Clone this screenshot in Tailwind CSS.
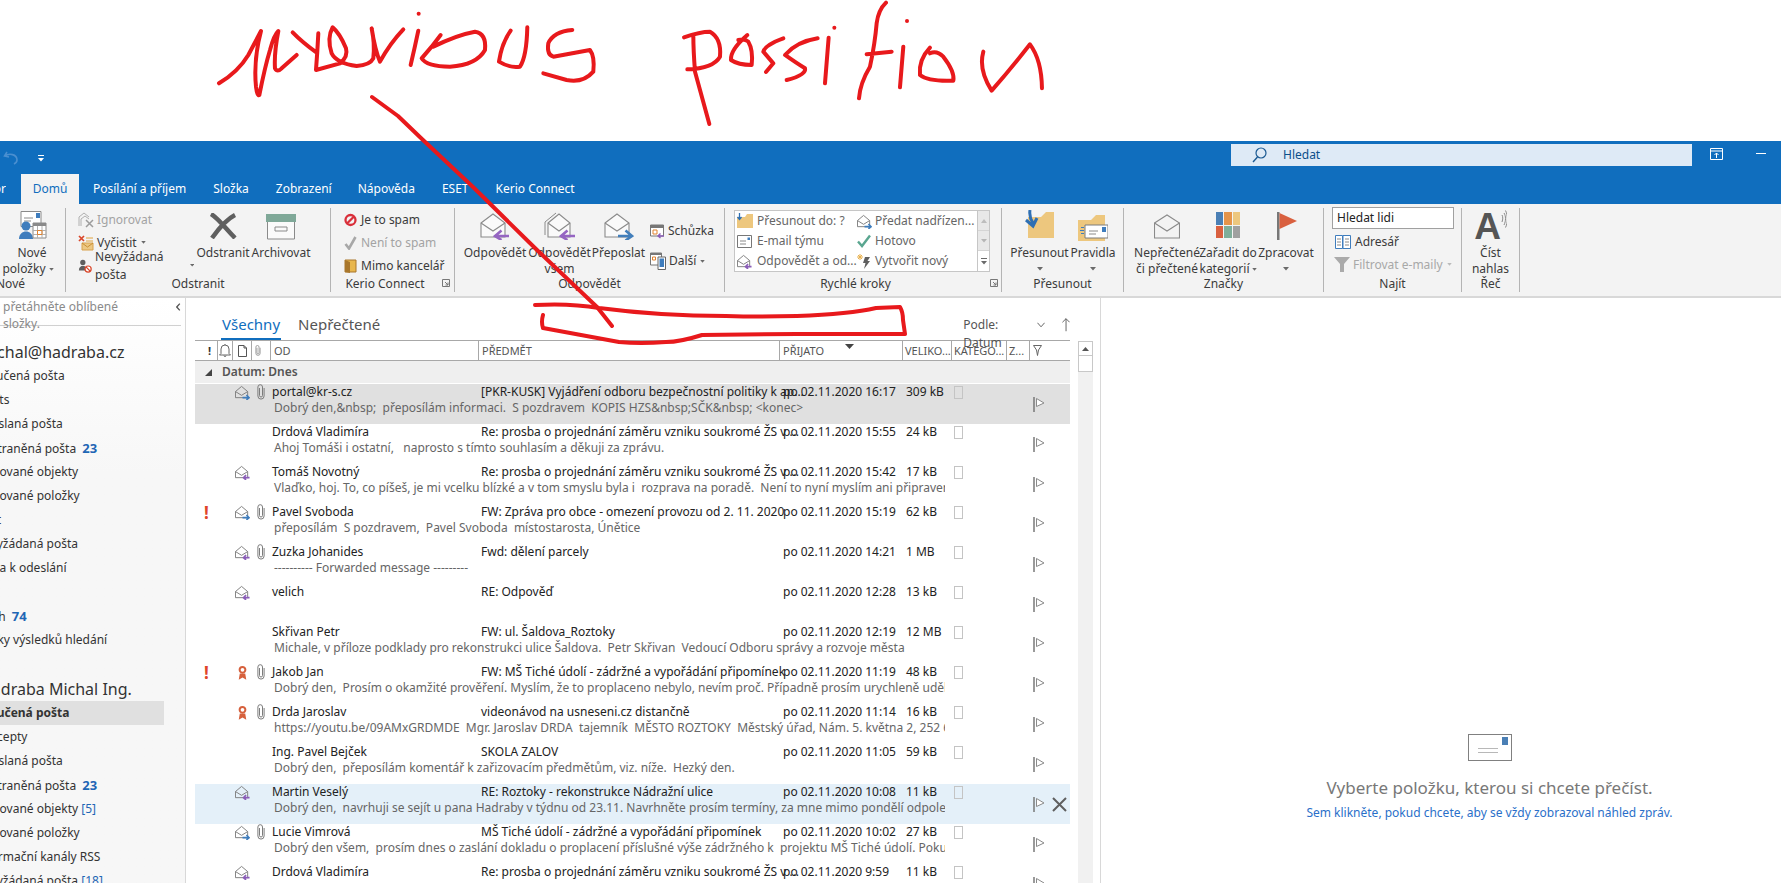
<!DOCTYPE html>
<html lang="cs">
<head>
    <meta charset="UTF-8">
    <title>Outlook</title>
    <script src="https://cdn.jsdelivr.net/npm/@tailwindcss/browser@4"></script>
</head>
<body class="bg-white">
<svg class="hidden" xmlns="http://www.w3.org/2000/svg">
    <symbol id="caret" viewBox="0 0 6 4"><path d="M0 0h6L3 3.5z" fill="#6a6a6a"/></symbol>
    <symbol id="env-reply" viewBox="0 0 16 16"><path d="M.5 7 7 1.5 13.500 7v6.500H.5z" fill="none" stroke="#7c7c7c"/><path d="M.5 7 7 11l6.500-4" fill="none" stroke="#7c7c7c"/><path d="M15.500 13.500H9m2.800-2.800L9 13.500l2.800 2.400" fill="none" stroke="#8a5db8" stroke-width="1.700"/></symbol>
    <symbol id="env-fwd" viewBox="0 0 16 16"><path d="M.5 7 7 1.500 13.500 7v6.500H.5z" fill="none" stroke="#7c7c7c"/><path d="M.5 7 7 11l6.500-4" fill="none" stroke="#7c7c7c"/><path d="M8 13.500h7m-2.800-2.800 2.800 2.800-2.800 2.400" fill="none" stroke="#3f7dbd" stroke-width="1.700"/></symbol>
    <symbol id="clip" viewBox="0 0 8 16"><path d="M2.500 4v7.500a1.500 1.500 0 0 0 3 0V3a2.300 2.300 0 0 0-4.600 0v9a3.100 3.100 0 0 0 6.200 0V4" fill="none" stroke="#7c7c7c"/></symbol>
    <symbol id="badge" viewBox="0 0 10 16"><circle cx="5" cy="4.500" r="3.200" fill="none" stroke="#d6603c" stroke-width="2.200"/><path d="M2 8.500.8 15.500 5 13l4.200 2.500L8 8.500z" fill="#d6603c"/></symbol>
    <symbol id="flag" viewBox="0 0 12 15"><path d="M1 0v15" stroke="#6f6f6f" stroke-width="1.400"/><path d="M3.500 1.500 11 6 3.500 9.500z" fill="#fff" stroke="#8a8a8a"/></symbol>
    <symbol id="big-reply" viewBox="0 0 30 28"><path d="M1 11 13 2l12 9v14H1z" fill="#fff" fill-opacity=".6" stroke="#8a8a8a" stroke-width="1.100"/><path d="M1 11l12 8 12-8" fill="none" stroke="#8a8a8a" stroke-width="1.100"/><path d="M29 24H15m6.500-5.500L15 24l6.500 4" fill="none" stroke="#9565c2" stroke-width="2.600"/></symbol>
    <symbol id="big-fwd" viewBox="0 0 30 28"><path d="M1 11 13 2l12 9v14H1z" fill="#fff" fill-opacity=".6" stroke="#8a8a8a" stroke-width="1.100"/><path d="M1 11l12 8 12-8" fill="none" stroke="#8a8a8a" stroke-width="1.100"/><path d="M14 24h14m-6.500-5.500L28 24l-6.500 4.500" fill="none" stroke="#437fbb" stroke-width="2.600"/></symbol>
</svg>

<div class="relative w-full h-screen overflow-hidden font-['Noto_Sans',sans-serif] text-[12px] text-[#333]">
    <div class="h-[141px]"></div>

    <!-- title bar -->
    <div class="h-[33px] bg-[#106ebe] flex items-center">
        <svg class="ml-[3px] w-[17px] h-[16px] mt-[1px]" viewBox="0 0 17 16"><path d="M4 2 1.500 6 6 7M2 6c4-3 12-2 12 4 0 2-1 3-3 4" fill="none" stroke="#4a8fd0" stroke-width="1.600"/></svg>
        <svg class="ml-[18px] w-[6px] h-[7px] mt-[1px]" viewBox="0 0 6 7"><path d="M0 0h6v1H0zM0 3h6L3 6.500z" fill="#fff"/></svg>
        <div class="ml-[1187px] w-[461px] h-[22px] -mt-[6px] bg-[#deeaf6] flex items-center text-[#0b4f8a]">
            <svg class="ml-[21px] w-[15px] h-[16px]" viewBox="0 0 15 16"><circle cx="9" cy="6" r="5" fill="none" stroke="#1b5a92" stroke-width="1.200"/><path d="M5.500 10 1 15" stroke="#1b5a92" stroke-width="1.400"/></svg>
            <span class="ml-[16px] text-[12px]">Hledat</span>
        </div>
        <svg class="ml-[18px] w-[13px] h-[12px] -mt-[8px]" viewBox="0 0 13 12"><path d="M.5.5h12v11H.5zM.5 3h12M6.500 10V5M4.500 7l2-2 2 2" fill="none" stroke="#fff"/></svg>
        <div class="ml-[33px] w-[10px] h-[1px] -mt-[8px] bg-white"></div>
    </div>

    <!-- tabs -->
    <div class="h-[30px] bg-[#106ebe] flex text-white text-[12px]">
        <div class="w-[6px] overflow-hidden flex justify-end items-center"><span>Soubor</span></div>
        <div class="ml-[15px] w-[58px] bg-[#f3f3f3] text-[#106ebe] flex items-center justify-center">Domů</div>
        <div class="ml-[14px] flex items-center">Posílání a příjem</div>
        <div class="ml-[27px] flex items-center">Složka</div>
        <div class="ml-[27px] flex items-center">Zobrazení</div>
        <div class="ml-[26px] flex items-center">Nápověda</div>
        <div class="ml-[27px] flex items-center">ESET</div>
        <div class="ml-[27px] flex items-center">Kerio Connect</div>
    </div>

    <!-- ribbon -->
    <div class="h-[94px] bg-[#f3f3f3] border-b-2 border-[#d8d8d8] flex pt-[4px] text-[#3b3b3b]">
        <!-- Nove -->
        <section class="w-[66px] h-[84px] border-r border-[#b4b4b4] flex flex-col">
            <div class="h-[72px] flex">
                <div class="w-[60px] ml-[2px] flex flex-col items-center">
                    <svg class="mt-[3px] h-[29px] w-[30px] mb-[5px]" viewBox="0 0 30 29"><path d="M4 .5h20v15H4z" fill="#fff" stroke="#8a8a8a"/><path d="M19 2h4v5h-4z" fill="#3f7dbd"/><path d="M7 7h9M7 10h7" stroke="#8a8a8a"/><circle cx="9" cy="15" r="4.500" fill="#3f7dbd"/><path d="M2 28c0-10 14-10 14 0z" fill="#3f7dbd"/><path d="M16 12h13v15H16z" fill="#fff" stroke="#8a8a8a"/><path d="M16 12h13v3H16z" fill="#8a8a8a"/><path d="M20.500 15v12M25 15v12M16 19.500h13M16 23.500h13" stroke="#b0b0b0"/><path d="M20.500 19.500H25v4h-4.500z" fill="none" stroke="#e0822f"/></svg>
                    <div class="leading-[16px]">Nové</div>
                    <div class="leading-[16px] flex items-center gap-[3px] -ml-[8px]">položky<svg class="w-[5px] h-[3px]"><use href="#caret"/></svg></div>
                </div>
            </div>
            <div class="-ml-[4px] h-[16px] leading-[14px]">Nové</div>
        </section>
        <!-- Odstranit -->
        <section class="w-[265px] h-[84px] border-r border-[#b4b4b4] flex flex-col">
            <div class="h-[72px] flex">
                <div class="w-[128px] pl-[12px]">
                    <div class="h-[23px] flex items-center gap-[3px] text-[#a3a3a3]"><svg class="w-[16px] h-[16px]" viewBox="0 0 16 16"><path d="M1 14V5l5-4 5 4M3 14V7l4-3 4 3" fill="none" stroke="#b0b0b0"/><path d="M8 8l7 7m0-7-7 7" stroke="#9c9c9c" stroke-width="1.500"/></svg>Ignorovat</div>
                    <div class="h-[23px] flex items-center gap-[3px]"><svg class="w-[16px] h-[16px]" viewBox="0 0 16 16"><path d="M1 1l5 5m0-5-5 5" stroke="#d9472b" stroke-width="1.700"/><path d="M8 3h7M8 6h7" stroke="#e0a23c"/><path d="M4 8h11v7H4z" fill="#ecc883" stroke="#d9a24c"/><path d="M4 8l5.500 4L15 8" fill="none" stroke="#c98f35"/></svg>Vyčistit<svg class="w-[5px] h-[3px] ml-[1px]"><use href="#caret"/></svg></div>
                    <div class="h-[23px] flex items-center gap-[3px]"><svg class="w-[16px] h-[16px]" viewBox="0 0 16 16"><circle cx="5.500" cy="4" r="3" fill="#5e5e5e"/><path d="M1 13c0-7 9-7 9 0z" fill="#5e5e5e"/><circle cx="11.500" cy="11.500" r="3.500" fill="#fff" stroke="#d9472b" stroke-width="1.400"/><path d="m9 9 5 5" stroke="#d9472b" stroke-width="1.400"/></svg>Nevyžádaná pošta<svg class="w-[5px] h-[3px] ml-[1px]"><use href="#caret"/></svg></div>
                </div>
                <div class="w-[58px] flex flex-col items-center">
                    <svg class="mt-[5px] w-[30px] h-[26px] mb-[6px]" viewBox="0 0 30 26"><path d="M3 1c6 3 17 17 24 24M27 2C19 6 9 18 4 25" fill="none" stroke="#5f5f5f" stroke-width="4.500"/></svg>
                    <div class="leading-[16px]">Odstranit</div>
                </div>
                <div class="w-[58px] flex flex-col items-center">
                    <svg class="mt-[6px] w-[30px] h-[26px] mb-[5px]" viewBox="0 0 30 26"><path d="M0 0h30v8H0z" fill="#7fa898"/><path d="M1.500 8v17h27V8" fill="#fff" fill-opacity=".6" stroke="#8a8a8a"/><path d="M9 13h12v4H9z" fill="none" stroke="#8a8a8a"/></svg>
                    <div class="leading-[16px]">Archivovat</div>
                </div>
            </div>
            <div class="h-[16px] leading-[14px] text-center">Odstranit</div>
        </section>
        <!-- Kerio -->
        <section class="w-[124px] h-[84px] border-r border-[#b4b4b4] flex flex-col">
            <div class="h-[72px] pl-[13px]">
                <div class="h-[23px] flex items-center gap-[4px]"><svg class="w-[13px] h-[14px]" viewBox="0 0 13 14"><circle cx="6.500" cy="7" r="5" fill="none" stroke="#d92f3a" stroke-width="2.300"/><path d="m3 10.500 7-7" stroke="#d92f3a" stroke-width="2.300"/></svg>Je to spam</div>
                <div class="h-[23px] flex items-center gap-[4px] text-[#a3a3a3]"><svg class="w-[13px] h-[14px]" viewBox="0 0 13 14"><path d="M1.500 8 5 12.500 11.500 1" fill="none" stroke="#a8a8a8" stroke-width="2.600"/></svg>Není to spam</div>
                <div class="h-[23px] flex items-center gap-[4px]"><svg class="w-[13px] h-[14px]" viewBox="0 0 13 14"><path d="M1 1h11v12H1z" fill="#e8b64c" stroke="#a9772c"/><path d="M1 1l5 2v11l-5-1z" fill="#a9772c"/></svg>Mimo kancelář</div>
            </div>
            <div class="h-[16px] leading-[14px] flex"><span class="w-[108px] text-center">Kerio Connect</span><svg class="ml-[3px] mt-[2px] w-[8px] h-[8px]" viewBox="0 0 8 8"><path d="M.5 7.500v-7h7v7zM3 3l3 3M6 3.500V6H3.500" fill="none" stroke="#777"/></svg></div>
        </section>
        <!-- Odpovedet -->
        <section class="w-[270px] h-[84px] border-r border-[#b4b4b4] flex flex-col">
            <div class="h-[72px] flex pl-[8px]">
                <div class="w-[64px] flex flex-col items-center">
                    <svg class="mt-[4px] w-[30px] h-[28px] mb-[5px]"><use href="#big-reply"/></svg>
                    <div class="leading-[16px]">Odpovědět</div>
                </div>
                <div class="w-[65px] flex flex-col items-center">
                    <svg class="mt-[3px] w-[31px] h-[29px] mb-[5px]" viewBox="0 0 31 29"><path d="M1 24V11L12 2" fill="none" stroke="#8a8a8a"/><path d="M4 12 15 3l11 9v14H4z" fill="#fff" fill-opacity=".6" stroke="#8a8a8a" stroke-width="1.100"/><path d="M4 12l11 8 11-8" fill="none" stroke="#8a8a8a" stroke-width="1.100"/><path d="M31 25H17m6.500-5.500L17 25l6.500 4" fill="none" stroke="#9565c2" stroke-width="2.600"/></svg>
                    <div class="leading-[16px]">Odpovědět</div>
                    <div class="leading-[16px]">všem</div>
                </div>
                <div class="w-[53px] flex flex-col items-center">
                    <svg class="mt-[4px] w-[30px] h-[28px] mb-[5px]"><use href="#big-fwd"/></svg>
                    <div class="leading-[16px]">Přeposlat</div>
                </div>
                <div class="ml-[5px] pt-[8px]">
                    <div class="h-[30px] flex items-center gap-[4px]"><svg class="w-[14px] h-[15px]" viewBox="0 0 14 15"><path d="M.5 1h13v11H.5z" fill="#fff" stroke="#777"/><path d="M.5 1h13v3H.5z" fill="#777"/><path d="M3 6h4v4H3z" fill="none" stroke="#e0822f"/><path d="M14 12H8m2.500-2.500L8 12l2.500 2" fill="none" stroke="#8a5db8" stroke-width="1.400"/></svg>Schůzka</div>
                    <div class="h-[30px] flex items-center gap-[3px]"><svg class="w-[16px] h-[18px]" viewBox="0 0 16 18"><path d="M.5 1h11v12H.5z" fill="#fff" stroke="#777"/><path d="M.5 1h11v2H.5z" fill="#777"/><path d="M2.500 5h3v3h-3z" fill="none" stroke="#e0822f"/><path d="M8 5h7.500v12.500H8z" fill="#fff" stroke="#666"/><path d="M9.500 6.500H14V15H9.500z" fill="#3f7dbd"/></svg>Další<svg class="w-[5px] h-[3px] ml-[1px]"><use href="#caret"/></svg></div>
                </div>
            </div>
            <div class="h-[16px] leading-[14px] text-center">Odpovědět</div>
        </section>
        <!-- Rychle kroky -->
        <section class="w-[277px] h-[84px] border-r border-[#b4b4b4] flex flex-col">
            <div class="h-[72px] pl-[9px] pt-[2px]">
                <div class="w-[256px] h-[62px] bg-white border border-[#c6c6c6] flex">
                    <div class="w-[122px] pl-[2px] text-[#666]">
                        <div class="h-[20px] flex items-center gap-[4px]"><svg class="w-[16px] h-[16px]" viewBox="0 0 16 16"><path d="M0 4h8l2-3h6v14H0z" fill="#edc77e"/><path d="M2.500 0v6M.500 4l2 2.500 2-2.500" fill="none" stroke="#2e6fb3" stroke-width="1.300"/></svg>Přesunout do: ?</div>
                        <div class="h-[20px] flex items-center gap-[5px]"><svg class="w-[15px] h-[13px]" viewBox="0 0 15 13"><path d="M.5.5h14v12H.5z" fill="#fff" stroke="#777"/><path d="M10.500 2.500H13V5h-2.500z" fill="#3f7dbd"/><path d="M3 6h6M3 9h6" stroke="#888"/></svg>E-mail týmu</div>
                        <div class="h-[20px] flex items-center gap-[5px]"><svg class="w-[15px] h-[15px]"><use href="#env-reply"/></svg>Odpovědět a od...</div>
                    </div>
                    <div class="w-[120px] text-[#666]">
                        <div class="h-[20px] flex items-center gap-[3px]"><svg class="w-[15px] h-[15px]"><use href="#env-fwd"/></svg>Předat nadřízen...</div>
                        <div class="h-[20px] flex items-center gap-[4px]"><svg class="w-[14px] h-[14px]" viewBox="0 0 14 14"><path d="M1 7.500 5 12 13 1.500" fill="none" stroke="#5aa690" stroke-width="2.400"/></svg>Hotovo</div>
                        <div class="h-[20px] flex items-center gap-[4px]"><svg class="w-[14px] h-[15px]" viewBox="0 0 14 15"><path d="M3 0v6M0 3h6M1 1l4 4m0-4-4 4" stroke="#e8b04c"/><path d="M8 3h5l-2.500 4H13l-6 8 1.500-6H6z" fill="#5f5f5f"/></svg>Vytvořit nový</div>
                    </div>
                    <div class="w-[12px] border-l border-[#c6c6c6] bg-[#e8e8e8] flex-1 flex flex-col">
                        <div class="h-[20px] border-b border-[#d4d4d4] flex items-center justify-center"><svg class="w-[6px] h-[4px]" viewBox="0 0 6 4"><path d="M0 4h6L3 0z" fill="#bdbdbd"/></svg></div>
                        <div class="h-[20px] border-b border-[#d4d4d4] flex items-center justify-center"><svg class="w-[6px] h-[4px]"><use href="#caret" opacity=".4"/></svg></div>
                        <div class="flex-1 bg-white flex items-center justify-center"><svg class="w-[6px] h-[7px]" viewBox="0 0 6 7"><path d="M0 0h6v1H0zM0 3h6L3 6.500z" fill="#6a6a6a"/></svg></div>
                    </div>
                </div>
            </div>
            <div class="h-[16px] leading-[14px] flex"><span class="w-[261px] text-center">Rychlé kroky</span><svg class="ml-[4px] mt-[2px] w-[8px] h-[8px]" viewBox="0 0 8 8"><path d="M.5 7.500v-7h7v7zM3 3l3 3M6 3.500V6H3.500" fill="none" stroke="#777"/></svg></div>
        </section>
        <!-- Presunout -->
        <section class="w-[122px] h-[84px] border-r border-[#b4b4b4] flex flex-col">
            <div class="h-[72px] flex pl-[8px]">
                <div class="w-[59px] flex flex-col items-center">
                    <svg class="mt-[2px] w-[30px] h-[28px] mb-[7px]" viewBox="0 0 30 28"><path d="M3 7h13l5-5h8v26H3z" fill="#edc77e"/><path d="M5 0c-1 6 1 10 3 13M1 10l7 6 4-8" fill="none" stroke="#2e6fb3" stroke-width="3"/></svg>
                    <div class="leading-[16px]">Přesunout</div>
                    <svg class="mt-[6px] w-[6px] h-[4px]"><use href="#caret"/></svg>
                </div>
                <div class="w-[48px] flex flex-col items-center">
                    <svg class="mt-[6px] w-[30px] h-[27px] mb-[4px]" viewBox="0 0 30 27"><path d="M0 6h13l5-5h9v26H0z" fill="#edc77e"/><path d="M7 11h23v13H7z" fill="#fff" stroke="#7c7c7c"/><path d="M24 13h4v5h-4zM3 13h3v1H3zM2 16h4v1H2zM3 19h3v1H3z" fill="#3f7dbd"/><path d="M11 17h9M11 20h7" stroke="#8a8a8a"/></svg>
                    <div class="leading-[16px]">Pravidla</div>
                    <svg class="mt-[6px] w-[6px] h-[4px]"><use href="#caret"/></svg>
                </div>
            </div>
            <div class="h-[16px] leading-[14px] text-center">Přesunout</div>
        </section>
        <!-- Znacky -->
        <section class="w-[200px] h-[84px] border-r border-[#b4b4b4] flex flex-col">
            <div class="h-[72px] flex pl-[11px]">
                <div class="w-[64px] flex flex-col items-center">
                    <svg class="mt-[6px] w-[26px] h-[25px] mb-[6px]" viewBox="0 0 26 25"><path d="M.5 9 13 1l12.500 8v15H.5z" fill="none" stroke="#8a8a8a" stroke-width="1.100"/><path d="M.5 9 13 17l12.500-8" fill="none" stroke="#8a8a8a" stroke-width="1.100"/></svg>
                    <div class="leading-[16px]">Nepřečtené</div>
                    <div class="leading-[16px]">či přečtené</div>
                </div>
                <div class="w-[58px] flex flex-col items-center">
                    <div class="mt-[4px] mb-[7px] grid grid-cols-3 gap-[1px] w-[24px] h-[26px]">
                        <div class="bg-[#4a7fb5]"></div><div class="bg-[#e5944a]"></div><div class="bg-[#edc77e]"></div>
                        <div class="bg-[#d9603f]"></div><div class="bg-[#7fae9a]"></div><div class="bg-[#a0a0a0]"></div>
                    </div>
                    <div class="leading-[16px]">Zařadit do</div>
                    <div class="leading-[16px] flex items-center gap-[2px]">kategorií<svg class="w-[5px] h-[3px]"><use href="#caret"/></svg></div>
                </div>
                <div class="w-[58px] flex flex-col items-center">
                    <svg class="mt-[4px] w-[20px] h-[28px] mb-[5px] ml-[2px]" viewBox="0 0 20 28"><path d="M0 0h2.500v28H0z" fill="#777"/><path d="M2.500 1 20 9 2.500 17z" fill="#d9603f"/></svg>
                    <div class="leading-[16px]">Zpracovat</div>
                    <svg class="mt-[6px] w-[6px] h-[4px]"><use href="#caret"/></svg>
                </div>
            </div>
            <div class="h-[16px] leading-[14px] text-center">Značky</div>
        </section>
        <!-- Najit -->
        <section class="w-[138px] h-[84px] border-r border-[#b4b4b4] flex flex-col">
            <div class="h-[72px] pl-[8px]">
                <div class="w-[122px] h-[22px] -mt-[1px] mb-[1px] bg-white border border-[#a0a0a0] flex items-center pl-[4px] text-[#222]">Hledat lidi</div>
                <div class="h-[23px] flex items-center gap-[4px] pl-[3px]"><svg class="w-[16px] h-[14px]" viewBox="0 0 16 14"><path d="M.5.5h7v13h-7zM8 .5h7.500v13H8z" fill="#fff" stroke="#3f7dbd"/><path d="M2 4h4M2 7h4M2 10h4M10 4h4M10 7h4M10 10h4" stroke="#8a8a8a"/></svg>Adresář</div>
                <div class="h-[23px] flex items-center gap-[3px] pl-[2px] text-[#a8a8a8]"><svg class="w-[16px] h-[15px]" viewBox="0 0 16 15"><path d="M0 0h16L10 7v8H6V7z" fill="#aaa"/></svg>Filtrovat e-maily<svg class="w-[5px] h-[3px] opacity-40 ml-[1px]"><use href="#caret"/></svg></div>
            </div>
            <div class="h-[16px] leading-[14px] text-center">Najít</div>
        </section>
        <!-- Rec -->
        <section class="w-[58px] h-[84px] border-r border-[#b4b4b4] flex flex-col">
            <div class="h-[72px] flex flex-col items-center">
                <div class="h-[37px] flex items-start">
                    <span class="font-bold text-[37px] leading-[38px] text-[#555] font-['Liberation_Sans',sans-serif]">A</span>
                    <svg class="w-[6px] h-[18px] mt-[2px]" viewBox="0 0 6 18"><path d="M1 5c1 2 1 4 0 7M3 3c2 3 2 8 0 12M4.500 .5c2.500 5 2.500 12 0 17" fill="none" stroke="#7c7c7c" stroke-width=".9"/></svg>
                </div>
                <div class="leading-[16px]">Číst</div>
                <div class="leading-[16px]">nahlas</div>
            </div>
            <div class="h-[16px] leading-[14px] text-center">Řeč</div>
        </section>
    </div>

    <!-- main -->
    <div class="flex h-[587px]">
        <!-- folder pane -->
        <aside class="w-[186px] border-r border-[#d8d8d8] bg-linear-to-b from-white to-[#f7f7f7] to-30% overflow-hidden">
            <div class="h-[28px] w-[181px] border-b border-[#d0d0d0] flex text-[#8a8a8a] pl-[3px]">
                <span class="h-[17px] leading-[17px]">přetáhněte oblíbené složky.</span>
                <svg class="ml-[26px] mt-[5px] w-[5px] h-[8px]" viewBox="0 0 5 8"><path d="M4 .5.800 4 4 7.500" fill="none" stroke="#555" stroke-width="1.400"/></svg>
            </div>
            <div class="mt-[14px] -ml-[25px]">
                <div class="h-[24px] leading-[24px] text-[16px] ml-[3px]">michal@hadraba.cz</div>
                <div class="h-[24px] leading-[24px]">Doručená pošta</div>
                <div class="h-[24px] leading-[24px]">Drafts</div>
                <div class="h-[24px] leading-[24px]">Odeslaná pošta</div>
                <div class="h-[24px] leading-[24px]">Odstraněná pošta <b class="ml-[3px] text-[13px] text-[#1f66b5]">23</b></div>
                <div class="h-[24px] leading-[24px]">Blokované objekty</div>
                <div class="h-[24px] leading-[24px]">Plánované položky</div>
                <div class="h-[24px] leading-[24px]">Chat</div>
                <div class="h-[24px] leading-[24px]">Nevyžádaná pošta</div>
                <div class="h-[24px] leading-[24px]">Pošta k odeslání</div>
                <div class="h-[24px]"></div>
                <div class="h-[24px] leading-[24px]">Trash <b class="ml-[3px] text-[13px] text-[#1f66b5]">74</b></div>
                <div class="h-[24px] leading-[24px]">Složky výsledků hledání</div>
                <div class="mt-[25px] h-[24px] leading-[24px] text-[16px] ml-[5px]">Hadraba Michal Ing.</div>
                <div class="h-[24px] leading-[24px] w-[189px] bg-[#e0e0e0] font-bold">Doručená pošta</div>
                <div class="h-[24px] leading-[24px]">Koncepty</div>
                <div class="h-[24px] leading-[24px]">Odeslaná pošta</div>
                <div class="h-[24px] leading-[24px]">Odstraněná pošta <b class="ml-[3px] text-[13px] text-[#1f66b5]">23</b></div>
                <div class="h-[24px] leading-[24px]">Blokované objekty <span class="text-[#1f66b5]">[5]</span></div>
                <div class="h-[24px] leading-[24px]">Plánované položky</div>
                <div class="h-[24px] leading-[24px]">Informační kanály RSS</div>
                <div class="h-[24px] leading-[24px]">Nevyžádaná pošta <span class="text-[#1f66b5]">[18]</span></div>
            </div>
        </aside>

        <!-- message list -->
        <div class="w-[915px] flex border-r border-[#d8d8d8]">
            <div class="w-[875px] ml-[9px] flex-none">
                <div class="h-[42px] flex relative">
                    <div class="ml-[26px] h-[42px] pt-[16px] pl-[1px] pr-[1px] border-b-2 border-[#106ebe] text-[#106ebe] text-[15px] leading-[20px]">Všechny</div>
                    <div class="ml-[17px] pt-[16px] text-[15px] leading-[20px] text-[#555]">Nepřečtené</div>
                    <div class="ml-[583px] pt-[18px] leading-[18px] text-[#555] flex items-start">Podle: Datum
                        <svg class="ml-[5px] mt-[6px] w-[9px] h-[6px]" viewBox="0 0 9 6"><path d="M.5.500 4.500 5l4-4.500" fill="none" stroke="#555"/></svg>
                        <svg class="ml-[17px] mt-[1px] w-[9px] h-[15px]" viewBox="0 0 9 15"><path d="M4.500 15V1M.5 5l4-4 4 4" fill="none" stroke="#555"/></svg>
                    </div>
                </div>
                <!-- column headers -->
                <div class="h-[21px] flex border-y border-[#a8a8a8] text-[11px] leading-[19px] text-[#555]">
                    <div class="w-[22px] pl-[13px] font-bold text-[#333]">!</div>
                    <div class="w-[15px] border-l border-[#a8a8a8] flex items-center justify-center"><svg class="w-[12px] h-[13px]" viewBox="0 0 12 13"><path d="M2 9.500V5a4 4 0 0 1 8 0v4.500L11.500 11H.5zM5 11.500c0 1.500 2 1.500 2 0M6 0v1" fill="none" stroke="#666"/></svg></div>
                    <div class="w-[19px] border-l border-[#a8a8a8] flex items-center justify-center"><svg class="w-[9px] h-[12px]" viewBox="0 0 9 12"><path d="M.5.500H6L8.500 3v8.500h-8zM6 .5V3h2.500" fill="none" stroke="#555"/></svg></div>
                    <div class="w-[19px] border-l border-[#a8a8a8] flex items-center pl-[2px]"><svg class="w-[8px] h-[11px]"><use href="#clip"/></svg></div>
                    <div class="w-[208px] border-l border-[#a8a8a8] pl-[3px]">OD</div>
                    <div class="w-[301px] border-l border-[#a8a8a8] pl-[3px]">PŘEDMĚT</div>
                    <div class="w-[123px] border-l border-[#a8a8a8] pl-[3px] flex items-start">PŘIJATO<svg class="ml-[21px] mt-[3px] w-[9px] h-[5px]" viewBox="0 0 9 5"><path d="M0 0h9L4.500 5z" fill="#444"/></svg></div>
                    <div class="w-[49px] border-l border-[#a8a8a8] pl-[2px] overflow-hidden whitespace-nowrap">VELIKO...</div>
                    <div class="w-[55px] border-l border-[#a8a8a8] pl-[2px] overflow-hidden whitespace-nowrap">KATEGO...</div>
                    <div class="w-[23px] border-l border-[#a8a8a8] pl-[2px]">Z...</div>
                    <div class="w-[41px] border-l border-[#a8a8a8] pl-[3px] flex items-center"><svg class="w-[9px] h-[11px]" viewBox="0 0 9 11"><path d="M.5.500h8L5.500 5l-1 5.500L3.500 5z" fill="none" stroke="#666"/></svg></div>
                </div>
                <div class="h-[22px] mb-[1px] bg-[#efefef] flex items-center">
                    <svg class="ml-[10px] w-[7px] h-[7px]" viewBox="0 0 7 7"><path d="M7 0v7H0z" fill="#444"/></svg>
                    <span class="ml-[10px] font-semibold text-[#555]">Datum: Dnes</span>
                </div>

                <!-- rows -->
                <div class="h-[40px] flex bg-[#e0e0e0]">
                    <div class="w-[40px]"></div>
                    <div class="w-[22px] pt-[1px]"><svg class="w-[15px] h-[15px]"><use href="#env-fwd"/></svg></div>
                    <div class="w-[15px]"><svg class="w-[8px] h-[16px]"><use href="#clip"/></svg></div>
                    <div class="w-[761px]">
                        <div class="h-[16px] leading-[16px] flex whitespace-nowrap text-[#222]"><span class="w-[209px]">portal@kr-s.cz</span><span class="w-[302px]">[PKR-KUSK] Vyjádření odboru bezpečnostní politiky k ap...</span><span class="w-[123px]">po 02.11.2020 16:17</span><span class="w-[48px]">309 kB</span><span class="w-[9px] h-[13px] mt-[2px] border border-[#c4c4c4]"></span></div>
                        <div class="h-[15px] leading-[15px] pl-[2px] w-[673px] overflow-hidden whitespace-pre text-[#666]">Dobrý den,&amp;nbsp;  přeposílám informaci.  S pozdravem  KOPIS HZS&amp;nbsp;SČK&amp;nbsp; &lt;konec&gt;</div>
                    </div>
                    <svg class="mt-[13px] w-[12px] h-[15px]"><use href="#flag"/></svg>
                </div>
                <div class="h-[40px] flex">
                    <div class="w-[40px]"></div>
                    <div class="w-[22px]"></div>
                    <div class="w-[15px]"></div>
                    <div class="w-[761px]">
                        <div class="h-[16px] leading-[16px] flex whitespace-nowrap text-[#222]"><span class="w-[209px]">Drdová Vladimíra</span><span class="w-[302px]">Re: prosba o projednání záměru vzniku soukromé ŽS v ...</span><span class="w-[123px]">po 02.11.2020 15:55</span><span class="w-[48px]">24 kB</span><span class="w-[9px] h-[13px] mt-[2px] border border-[#c4c4c4]"></span></div>
                        <div class="h-[15px] leading-[15px] pl-[2px] w-[673px] overflow-hidden whitespace-pre text-[#666]">Ahoj Tomáši i ostatní,   naprosto s tímto souhlasím a děkuji za zprávu.</div>
                    </div>
                    <svg class="mt-[13px] w-[12px] h-[15px]"><use href="#flag"/></svg>
                </div>
                <div class="h-[40px] flex">
                    <div class="w-[40px]"></div>
                    <div class="w-[22px] pt-[1px]"><svg class="w-[15px] h-[15px]"><use href="#env-reply"/></svg></div>
                    <div class="w-[15px]"></div>
                    <div class="w-[761px]">
                        <div class="h-[16px] leading-[16px] flex whitespace-nowrap text-[#222]"><span class="w-[209px]">Tomáš Novotný</span><span class="w-[302px]">Re: prosba o projednání záměru vzniku soukromé ŽS v ...</span><span class="w-[123px]">po 02.11.2020 15:42</span><span class="w-[48px]">17 kB</span><span class="w-[9px] h-[13px] mt-[2px] border border-[#c4c4c4]"></span></div>
                        <div class="h-[15px] leading-[15px] pl-[2px] w-[673px] overflow-hidden whitespace-pre text-[#666]">Vlaďko, hoj. To, co píšeš, je mi vcelku blízké a v tom smyslu byla i  rozprava na poradě.  Není to nyní myslím ani připraveno, ani na</div>
                    </div>
                    <svg class="mt-[13px] w-[12px] h-[15px]"><use href="#flag"/></svg>
                </div>
                <div class="h-[40px] flex">
                    <div class="w-[40px] pl-[9px] text-[17px] leading-[18px] font-bold text-[#e0452a]">!</div>
                    <div class="w-[22px] pt-[1px]"><svg class="w-[15px] h-[15px]"><use href="#env-fwd"/></svg></div>
                    <div class="w-[15px]"><svg class="w-[8px] h-[16px]"><use href="#clip"/></svg></div>
                    <div class="w-[761px]">
                        <div class="h-[16px] leading-[16px] flex whitespace-nowrap text-[#222]"><span class="w-[209px]">Pavel Svoboda</span><span class="w-[302px]">FW: Zpráva pro obce - omezení provozu od 2. 11. 2020</span><span class="w-[123px]">po 02.11.2020 15:19</span><span class="w-[48px]">62 kB</span><span class="w-[9px] h-[13px] mt-[2px] border border-[#c4c4c4]"></span></div>
                        <div class="h-[15px] leading-[15px] pl-[2px] w-[673px] overflow-hidden whitespace-pre text-[#666]">přeposílám  S pozdravem,  Pavel Svoboda  místostarosta, Únětice</div>
                    </div>
                    <svg class="mt-[13px] w-[12px] h-[15px]"><use href="#flag"/></svg>
                </div>
                <div class="h-[40px] flex">
                    <div class="w-[40px]"></div>
                    <div class="w-[22px] pt-[1px]"><svg class="w-[15px] h-[15px]"><use href="#env-reply"/></svg></div>
                    <div class="w-[15px]"><svg class="w-[8px] h-[16px]"><use href="#clip"/></svg></div>
                    <div class="w-[761px]">
                        <div class="h-[16px] leading-[16px] flex whitespace-nowrap text-[#222]"><span class="w-[209px]">Zuzka Johanides</span><span class="w-[302px]">Fwd: dělení parcely</span><span class="w-[123px]">po 02.11.2020 14:21</span><span class="w-[48px]">1 MB</span><span class="w-[9px] h-[13px] mt-[2px] border border-[#c4c4c4]"></span></div>
                        <div class="h-[15px] leading-[15px] pl-[2px] w-[673px] overflow-hidden whitespace-pre text-[#666]">---------- Forwarded message ---------</div>
                    </div>
                    <svg class="mt-[13px] w-[12px] h-[15px]"><use href="#flag"/></svg>
                </div>
                <div class="h-[40px] flex">
                    <div class="w-[40px]"></div>
                    <div class="w-[22px] pt-[1px]"><svg class="w-[15px] h-[15px]"><use href="#env-reply"/></svg></div>
                    <div class="w-[15px]"></div>
                    <div class="w-[761px]">
                        <div class="h-[16px] leading-[16px] flex whitespace-nowrap text-[#222]"><span class="w-[209px]">velich</span><span class="w-[302px]">RE: Odpověď</span><span class="w-[123px]">po 02.11.2020 12:28</span><span class="w-[48px]">13 kB</span><span class="w-[9px] h-[13px] mt-[2px] border border-[#c4c4c4]"></span></div>
                    </div>
                    <svg class="mt-[13px] w-[12px] h-[15px]"><use href="#flag"/></svg>
                </div>
                <div class="h-[40px] flex">
                    <div class="w-[40px]"></div>
                    <div class="w-[22px]"></div>
                    <div class="w-[15px]"></div>
                    <div class="w-[761px]">
                        <div class="h-[16px] leading-[16px] flex whitespace-nowrap text-[#222]"><span class="w-[209px]">Skřivan Petr</span><span class="w-[302px]">FW: ul. Šaldova_Roztoky</span><span class="w-[123px]">po 02.11.2020 12:19</span><span class="w-[48px]">12 MB</span><span class="w-[9px] h-[13px] mt-[2px] border border-[#c4c4c4]"></span></div>
                        <div class="h-[15px] leading-[15px] pl-[2px] w-[673px] overflow-hidden whitespace-pre text-[#666]">Michale, v příloze podklady pro rekonstrukci ulice Šaldova.  Petr Skřivan  Vedoucí Odboru správy a rozvoje města</div>
                    </div>
                    <svg class="mt-[13px] w-[12px] h-[15px]"><use href="#flag"/></svg>
                </div>
                <div class="h-[40px] flex">
                    <div class="w-[40px] pl-[9px] text-[17px] leading-[18px] font-bold text-[#e0452a]">!</div>
                    <div class="w-[22px] pl-[3px] pt-[1px]"><svg class="w-[9px] h-[16px]"><use href="#badge"/></svg></div>
                    <div class="w-[15px]"><svg class="w-[8px] h-[16px]"><use href="#clip"/></svg></div>
                    <div class="w-[761px]">
                        <div class="h-[16px] leading-[16px] flex whitespace-nowrap text-[#222]"><span class="w-[209px]">Jakob Jan</span><span class="w-[302px]">FW: MŠ Tiché údolí - zádržné a vypořádání připomínek</span><span class="w-[123px]">po 02.11.2020 11:19</span><span class="w-[48px]">48 kB</span><span class="w-[9px] h-[13px] mt-[2px] border border-[#c4c4c4]"></span></div>
                        <div class="h-[15px] leading-[15px] pl-[2px] w-[673px] overflow-hidden whitespace-pre text-[#666]">Dobrý den,  Prosím o okamžité prověření. Myslím, že to proplaceno nebylo, nevím proč. Případně prosím urychleně udělat a</div>
                    </div>
                    <svg class="mt-[13px] w-[12px] h-[15px]"><use href="#flag"/></svg>
                </div>
                <div class="h-[40px] flex">
                    <div class="w-[40px]"></div>
                    <div class="w-[22px] pl-[3px] pt-[1px]"><svg class="w-[9px] h-[16px]"><use href="#badge"/></svg></div>
                    <div class="w-[15px]"><svg class="w-[8px] h-[16px]"><use href="#clip"/></svg></div>
                    <div class="w-[761px]">
                        <div class="h-[16px] leading-[16px] flex whitespace-nowrap text-[#222]"><span class="w-[209px]">Drda Jaroslav</span><span class="w-[302px]">videonávod na usneseni.cz distančně</span><span class="w-[123px]">po 02.11.2020 11:14</span><span class="w-[48px]">16 kB</span><span class="w-[9px] h-[13px] mt-[2px] border border-[#c4c4c4]"></span></div>
                        <div class="h-[15px] leading-[15px] pl-[2px] w-[673px] overflow-hidden whitespace-pre text-[#666]">https://youtu.be/09AMxGRDMDE  Mgr. Jaroslav DRDA  tajemník  MĚSTO ROZTOKY  Městský úřad, Nám. 5. května 2, 252 63 Roztoky</div>
                    </div>
                    <svg class="mt-[13px] w-[12px] h-[15px]"><use href="#flag"/></svg>
                </div>
                <div class="h-[40px] flex">
                    <div class="w-[40px]"></div>
                    <div class="w-[22px]"></div>
                    <div class="w-[15px]"></div>
                    <div class="w-[761px]">
                        <div class="h-[16px] leading-[16px] flex whitespace-nowrap text-[#222]"><span class="w-[209px]">Ing. Pavel Bejček</span><span class="w-[302px]">SKOLA ZALOV</span><span class="w-[123px]">po 02.11.2020 11:05</span><span class="w-[48px]">59 kB</span><span class="w-[9px] h-[13px] mt-[2px] border border-[#c4c4c4]"></span></div>
                        <div class="h-[15px] leading-[15px] pl-[2px] w-[673px] overflow-hidden whitespace-pre text-[#666]">Dobrý den,  přeposílám komentář k zařizovacím předmětům, viz. níže.  Hezký den.</div>
                    </div>
                    <svg class="mt-[13px] w-[12px] h-[15px]"><use href="#flag"/></svg>
                </div>
                <div class="h-[40px] flex bg-[#e4f0f9]">
                    <div class="w-[40px]"></div>
                    <div class="w-[22px] pt-[1px]"><svg class="w-[15px] h-[15px]"><use href="#env-reply"/></svg></div>
                    <div class="w-[15px]"></div>
                    <div class="w-[761px]">
                        <div class="h-[16px] leading-[16px] flex whitespace-nowrap text-[#222]"><span class="w-[209px]">Martin Veselý</span><span class="w-[302px]">RE: Roztoky - rekonstrukce Nádražní ulice</span><span class="w-[123px]">po 02.11.2020 10:08</span><span class="w-[48px]">11 kB</span><span class="w-[9px] h-[13px] mt-[2px] border border-[#c4c4c4]"></span></div>
                        <div class="h-[15px] leading-[15px] pl-[2px] w-[673px] overflow-hidden whitespace-pre text-[#666]">Dobrý den,  navrhuji se sejít u pana Hadraby v týdnu od 23.11. Navrhněte prosím termíny, za mne mimo pondělí odpoledne a úterý</div>
                    </div>
                    <svg class="mt-[13px] w-[12px] h-[15px]"><use href="#flag"/></svg>
                    <svg class="ml-[7px] mt-[13px] w-[15px] h-[15px]" viewBox="0 0 15 15"><path d="M1 1l13 13M14 1 1 14" stroke="#5f5f5f" stroke-width="2"/></svg>
                </div>
                <div class="h-[40px] flex">
                    <div class="w-[40px]"></div>
                    <div class="w-[22px] pt-[1px]"><svg class="w-[15px] h-[15px]"><use href="#env-fwd"/></svg></div>
                    <div class="w-[15px]"><svg class="w-[8px] h-[16px]"><use href="#clip"/></svg></div>
                    <div class="w-[761px]">
                        <div class="h-[16px] leading-[16px] flex whitespace-nowrap text-[#222]"><span class="w-[209px]">Lucie Vimrová</span><span class="w-[302px]">MŠ Tiché údolí - zádržné a vypořádání připomínek</span><span class="w-[123px]">po 02.11.2020 10:02</span><span class="w-[48px]">27 kB</span><span class="w-[9px] h-[13px] mt-[2px] border border-[#c4c4c4]"></span></div>
                        <div class="h-[15px] leading-[15px] pl-[2px] w-[673px] overflow-hidden whitespace-pre text-[#666]">Dobrý den všem,  prosím dnes o zaslání dokladu o proplacení příslušné výše zádržného k  projektu MŠ Tiché údolí. Pokud nebude</div>
                    </div>
                    <svg class="mt-[13px] w-[12px] h-[15px]"><use href="#flag"/></svg>
                </div>
                <div class="h-[40px] flex">
                    <div class="w-[40px]"></div>
                    <div class="w-[22px] pt-[1px]"><svg class="w-[15px] h-[15px]"><use href="#env-reply"/></svg></div>
                    <div class="w-[15px]"></div>
                    <div class="w-[761px]">
                        <div class="h-[16px] leading-[16px] flex whitespace-nowrap text-[#222]"><span class="w-[209px]">Drdová Vladimíra</span><span class="w-[302px]">Re: prosba o projednání záměru vzniku soukromé ŽS v ...</span><span class="w-[123px]">po 02.11.2020 9:59</span><span class="w-[48px]">11 kB</span><span class="w-[9px] h-[13px] mt-[2px] border border-[#c4c4c4]"></span></div>
                    </div>
                    <svg class="mt-[13px] w-[12px] h-[15px]"><use href="#flag"/></svg>
                </div>
            </div>
            <!-- scrollbar -->
            <div class="ml-[8px] mt-[43px] w-[15px] bg-[#f1f1f1] flex-none">
                <div class="h-[15px] bg-white border border-[#c8c8c8] flex items-center justify-center"><svg class="w-[7px] h-[4px]" viewBox="0 0 7 4"><path d="M0 4h7L3.500 0z" fill="#555"/></svg></div>
                <div class="h-[17px] bg-white border border-[#c8c8c8] -mt-[1px]"></div>
            </div>
        </div>

        <!-- reading pane -->
        <div class="flex-1 pl-[97px] pt-[436px] flex flex-col items-center">
            <div class="w-[44px] h-[27px] border-[1.500px] border-[#808080] flex justify-end pt-[2px] pr-[3px] relative">
                <div class="w-[6px] h-[8px] bg-[#4a7fb5]"></div>
                <div class="absolute left-[9px] top-[13px] w-[20px] h-[5px] border-y border-[#b8b8b8]"></div>
            </div>
            <div class="mt-[15px] text-[17px] leading-[24px] text-[#787878] whitespace-nowrap">Vyberte položku, kterou si chcete přečíst.</div>
            <div class="mt-[5px] text-[#2a6fc9] leading-[16px] whitespace-nowrap">Sem klikněte, pokud chcete, aby se vždy zobrazoval náhled zpráv.</div>
        </div>
    </div>

    <!-- red pen annotation drawn over the window -->
    <svg class="absolute inset-0 pointer-events-none" width="1781" height="883" fill="none" stroke="#e8191c" stroke-linecap="round" stroke-linejoin="round">
        <g transform="translate(200 0) scale(.3333)" stroke-width="12">
            <path d="M57 250Q115 215 145 165L183 93Q160 180 168 260Q172 290 178 285Q195 200 210 150Q222 105 235 93Q222 160 225 205Q232 218 245 205L290 165"/>
            <path d="M278 97Q305 125 350 158M355 100Q352 160 348 210L420 190Q445 170 438 145Q420 100 398 82Q380 115 395 160Q410 190 470 198Q510 195 520 175Q525 130 515 85Q525 150 540 185Q570 130 610 88"/>
            <path d="M655 92Q645 140 632 195"/><path d="M656 41h.1"/>
            <path d="M722 105L695 140L665 175Q680 200 750 200Q830 195 855 150Q860 100 825 95Q770 105 700 140"/>
            <path d="M932 92Q905 130 897 185Q930 205 960 200Q980 170 982 82"/>
            <path d="M1117 90Q1060 95 1045 130Q1040 165 1060 170L1170 150Q1185 170 1180 215Q1150 250 1100 240L1030 220"/>
        </g>
        <g transform="translate(670 0) scale(.3333)" stroke-width="12">
            <path d="M42 112Q90 95 120 95Q155 115 150 170Q130 205 52 208M70 105Q70 150 75 215L118 372"/>
            <path d="M232 105Q180 150 183 180Q205 195 245 195Q250 150 235 125Q225 115 205 120"/>
            <path d="M340 115Q285 135 280 155L310 190L288 216"/>
            <path d="M443 115Q380 125 345 165Q380 190 405 205Q410 225 350 240"/>
            <path d="M476 113L465 250"/><path d="M493 83h.1"/>
            <path d="M648 8Q625 30 620 70Q615 130 600 200Q570 250 567 295M590 163L665 155"/>
            <path d="M700 140L690 262"/><path d="M711 63h.1"/>
            <path d="M780 143Q745 180 750 225Q775 245 850 242Q855 215 820 170Q800 150 780 160"/>
            <path d="M940 155Q925 210 965 272Q1020 210 1080 133Q1115 180 1116 265"/>
        </g>
        <path stroke-width="4" d="M372 97L398 116L423 140L473 187L537 250L597 307L612 326"/>
        <path stroke-width="4" d="M535 305Q570 303 599 308Q660 316 726 316Q760 317 797 316Q850 314 876 308L900 307Q903 312 903 320L905 334L797 334L702 335Q680 342 666 342Q640 344 619 342L543 328Q541 322 543 315"/>
    </svg>
</div>
</body>
</html>
